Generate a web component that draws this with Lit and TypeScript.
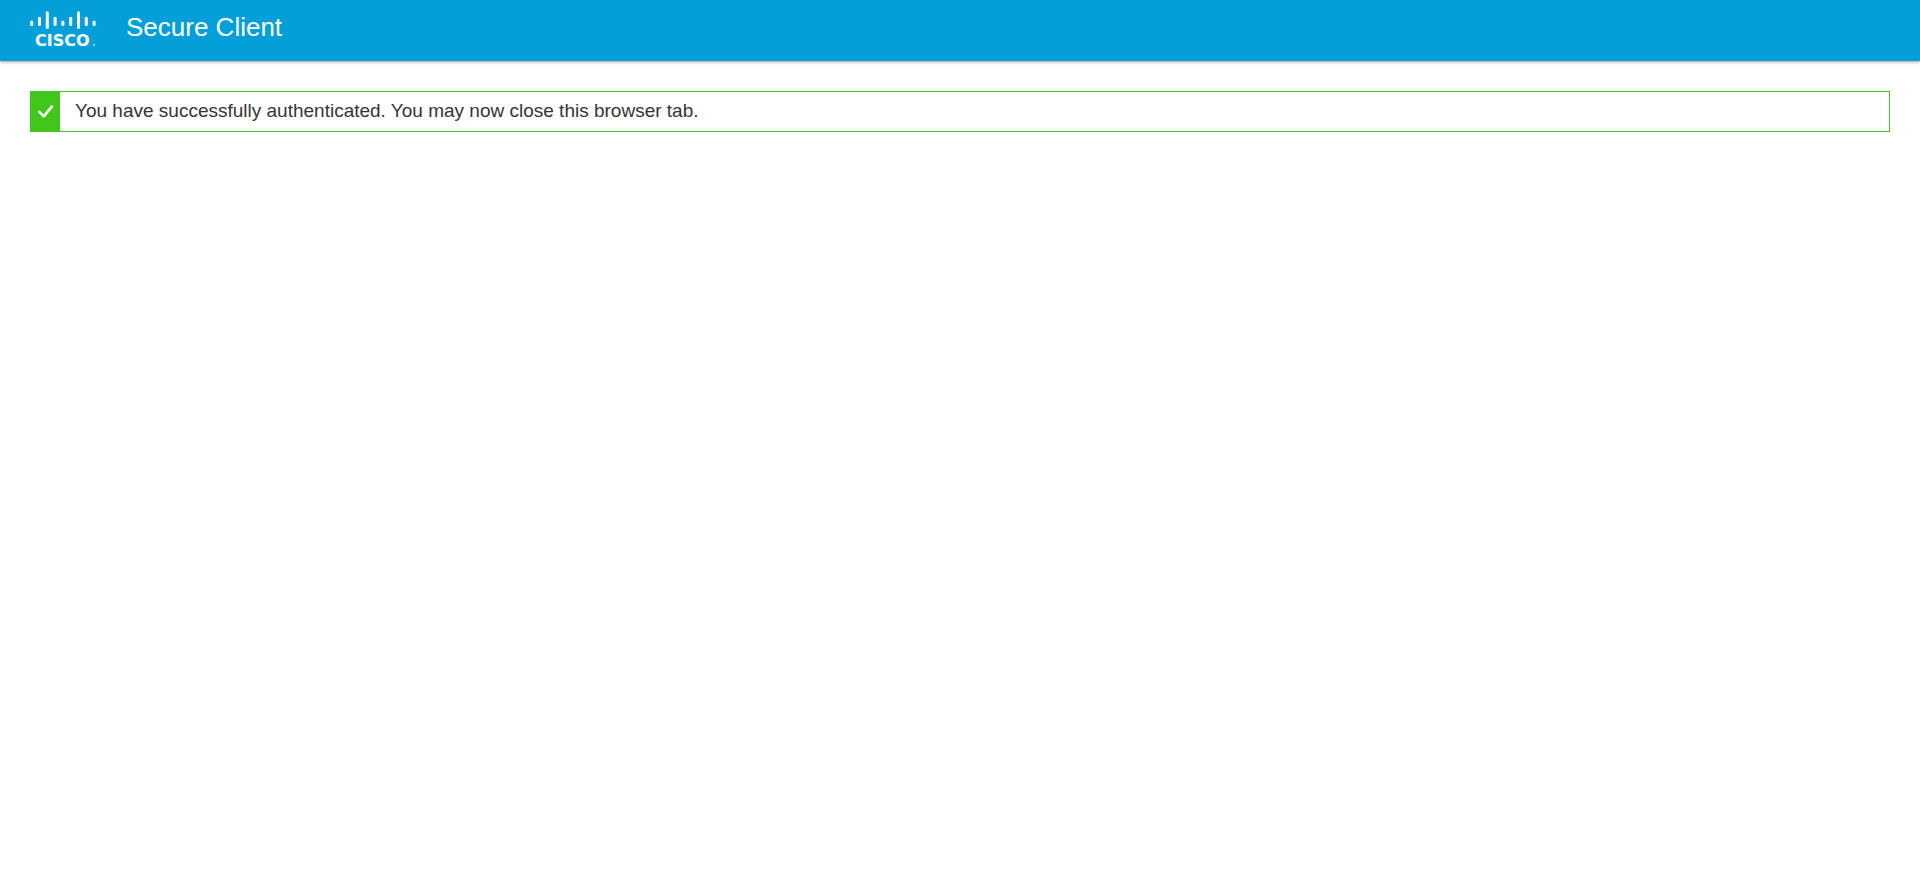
import { LitElement, html, css, svg } from "lit";
import { customElement } from "lit/decorators.js";

// Bars of the bridge mark: centre x, top and bottom of each stroke.
const BARS = [
  [1.7, 22, 24.6], [9.5, 18.2, 24.6], [17.3, 12.8, 27.4], [25.1, 18.2, 24.6], [32.9, 22, 24.6],
  [40.7, 18.2, 24.6], [48.5, 12.8, 27.4], [56.3, 18.2, 24.6], [64.1, 22, 24.6],
];

@customElement("app-root")
export class AppRoot extends LitElement {
  static styles = css`
    :host {
      display: block;
      color: #343537;
      font-family: "Liberation Sans", Arial, sans-serif;
    }
    .header {
      display: flex;
      gap: 30px;
      height: 61px;
      padding: 0 30px;
      box-sizing: border-box;
      background: #049fd9;
      color: #fff;
      box-shadow: 0 1px 3px rgba(0, 0, 0, 0.4);
    }
    .logo { display: block; width: 66px; height: 56px; }
    .wordmark { font: 700 16px "DejaVu Sans", sans-serif; }
    .title { margin: 0; font-size: 26px; font-weight: 400; line-height: 54px; }
    .main { padding: 30px; }
    .alert { display: flex; border: 1px solid #43c61b; }
    .badge {
      display: flex;
      align-items: center;
      justify-content: center;
      width: 29px;
      background: #43c61b;
    }
    .message { margin: 0; padding: 0 15px 2px; font-size: 19px; line-height: 37px; }
  `;

  render() {
    return html`
      <header class="header">
        <svg class="logo" viewBox="0 0 66 56" role="img" aria-label="Cisco">
          ${BARS.map(([x, top, bottom]) => svg`<line x1=${x} x2=${x} y1=${top} y2=${bottom} stroke="#fff" stroke-width="3" stroke-linecap="round"/>`)}
          <text class="wordmark" x="5" y="46" fill="#fff">CISCO</text>
          <circle cx="64" cy="45" r="0.9" fill="#fff" opacity="0.8"/>
        </svg>
        <h1 class="title">Secure Client</h1>
      </header>
      <main class="main">
        <div class="alert" role="status">
          <span class="badge">
            <svg width="16" height="14" viewBox="0 0 16 14" aria-hidden="true">
              <path d="M1.3 6.8 5.8 11.3 13.8 1.6" fill="none" stroke="#fff" stroke-width="2.6" stroke-linecap="round" stroke-linejoin="round"/>
            </svg>
          </span>
          <p class="message">You have successfully authenticated. You may now close this browser tab.</p>
        </div>
      </main>
    `;
  }
}
